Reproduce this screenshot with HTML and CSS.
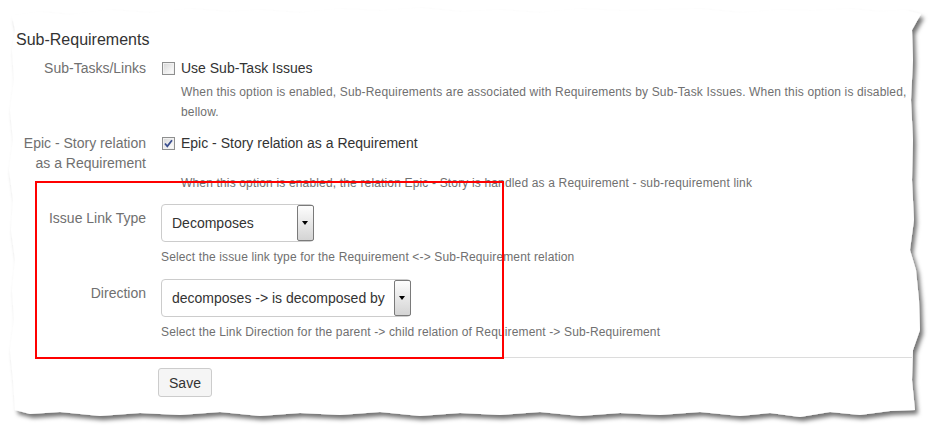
FILE: index.html
```html
<!DOCTYPE html>
<html lang="en">
<head>
<meta charset="utf-8">
<title>Sub-Requirements</title>
<link rel="stylesheet" href="styles.css">
</head>
<body>
<div class="sheet">
  <svg class="paper" width="930" height="431" viewBox="0 0 930 431" aria-hidden="true">
    <defs>
      <filter id="shadow" x="-5%" y="-5%" width="110%" height="115%">
        <feDropShadow dx="3" dy="4" stdDeviation="2" flood-color="#000" flood-opacity="0.55"/>
      </filter>
    </defs>
    <path filter="url(#shadow)" fill="#fff" d="M12,16 L40,12 L70,15 L110,10 L150,13 L190,9 L230,12 L260,10 L300,13 L340,9 L380,11 L420,8 L460,12 L500,10 L540,13 L580,9 L620,11 L660,10 L700,9 L740,13 L780,10 L810,11 L850,9 L880,12 L905,10 L921,14 L912,30 L913,60 L911,100 L913,140 L912,180 L914,220 L910,250 L916,270 L919,300 L920,330 L913,350 L912,380 L915,410 L890,411 L860,415 L830,412 L800,417 L770,413 L740,416 L700,412 L660,415 L620,413 L580,416 L540,412 L500,415 L460,413 L420,416 L380,412 L340,415 L300,413 L260,416 L220,412 L180,415 L140,413 L100,416 L60,412 L30,414 L15,410 L13,380 L10,350 L14,320 L12,290 L15,260 L11,230 L13,200 L9,170 L13,140 L10,110 L14,80 L12,50 L15,30 Z"/>
  </svg>

  <div class="content">
    <h2 class="title">Sub-Requirements</h2>

    <div class="row row-first">
      <div class="label">Sub-Tasks/Links</div>
      <div class="field">
        <div class="check"><span class="box"></span><span>Use Sub-Task Issues</span></div>
        <div class="desc desc-tight">When this option is enabled, Sub-Requirements are associated with Requirements by Sub-Task Issues. When this option is disabled,<br>bellow.</div>
      </div>
    </div>

    <div class="row row-second">
      <div class="label">Epic - Story relation as a Requirement</div>
      <div class="field">
        <div class="check"><span class="box checked"><svg width="11" height="11" viewBox="0 0 11 11"><path d="M2 5.5 L4.3 8.3 L9 2.2" fill="none" stroke="#3b4f8f" stroke-width="1.8"/></svg></span><span>Epic - Story relation as a Requirement</span></div>
        <div class="desc desc-loose">When this option is enabled, the relation Epic - Story is handled as a Requirement - sub-requirement link</div>
      </div>
    </div>

    <div class="row row-select">
      <div class="label label-select">Issue Link Type</div>
      <div class="field">
        <div class="select select-short"><span class="select-text">Decomposes</span><span class="arrow"></span></div>
        <div class="help">Select the issue link type for the Requirement &lt;-&gt; Sub-Requirement relation</div>
      </div>
    </div>

    <div class="row row-select row-last">
      <div class="label label-select">Direction</div>
      <div class="field">
        <div class="select select-long"><span class="select-text">decomposes -&gt; is decomposed by</span><span class="arrow"></span></div>
        <div class="help">Select the Link Direction for the parent -&gt; child relation of Requirement -&gt; Sub-Requirement</div>
      </div>
    </div>

    <div class="divider"></div>

    <div class="actions"><button class="btn" type="button">Save</button></div>
  </div>

  <div class="highlight"></div>
</div>
</body>
</html>
```

FILE: styles.css
```css
* { box-sizing: border-box; }

html, body {
  margin: 0;
  padding: 0;
  background: #fff;
}

body {
  font-family: "Liberation Sans", Arial, sans-serif;
  color: #333;
}

.sheet {
  position: relative;
  width: 930px;
  height: 431px;
  overflow: hidden;
}

.paper {
  position: absolute;
  left: 0;
  top: 0;
}

.content {
  position: relative;
  width: 912px;
  height: 405px;
  overflow: hidden;
  padding: 30px 0 0 16px;
}

.title {
  margin: 0;
  font-size: 16px;
  font-weight: normal;
  line-height: 20px;
  color: #333;
}

.row {
  display: grid;
  grid-template-columns: 130px 1fr;
  column-gap: 15px;
  align-items: start;
}

.row-first { margin-top: 8px; }
.row-second { margin-top: 11px; }
.row-select { margin-top: 10px; }
.row-last { margin-top: 11px; }

.label {
  text-align: right;
  font-size: 14px;
  line-height: 20px;
  color: #707070;
}

.label-select { padding-top: 5px; }

.field {
  min-width: 0;
}

.check {
  display: flex;
  align-items: center;
  gap: 6px;
  font-size: 14px;
  line-height: 20px;
  color: #333;
  padding-left: 1px;
}

.box {
  width: 13px;
  height: 13px;
  border: 1px solid #8e8f8f;
  background: linear-gradient(135deg, #d6d6d6 0%, #f4f4f4 70%, #fff 100%);
  box-shadow: inset 0 0 0 1px #f1f1f1;
  display: flex;
  align-items: center;
  justify-content: center;
  flex: none;
}

.desc {
  padding-left: 20px;
  font-size: 12px;
  line-height: 20px;
  letter-spacing: 0.16px;
  color: #707070;
  white-space: nowrap;
}

.desc-tight { margin-top: 4px; }
.desc-loose { margin-top: 20px; }

.select {
  display: flex;
  align-items: stretch;
  height: 38px;
  margin-top: 1px;
  border: 1px solid #ccc;
  border-radius: 4px;
  background: #fff;
}

.select-short { width: 153px; }
.select-long { width: 250px; }

.select-text {
  flex: 1;
  padding-left: 10px;
  font-size: 14px;
  line-height: 36px;
  color: #333;
  white-space: nowrap;
}

.arrow {
  position: relative;
  width: 17px;
  margin: 0 -1px 0 0;
  border: 1px solid #7a7a7a;
  border-radius: 2px;
  background: linear-gradient(#fdfdfd, #e8e8e8 50%, #d4d4d4);
  flex: none;
}

.arrow::after {
  content: "";
  position: absolute;
  left: 4px;
  top: 15px;
  border-left: 3.5px solid transparent;
  border-right: 3.5px solid transparent;
  border-top: 4px solid #000;
}

.help {
  margin-top: 5px;
  font-size: 12px;
  line-height: 20px;
  letter-spacing: 0.14px;
  color: #707070;
  white-space: nowrap;
}

.divider {
  margin: 15px 0 0 24px;
  height: 1px;
  background: #dcdcdc;
}

.actions {
  margin-top: 10px;
  padding-left: 142px;
}

.btn {
  width: 54px;
  height: 29px;
  padding: 0;
  border: 1px solid #ccc;
  border-radius: 3px;
  background: #f5f5f5;
  font-family: "Liberation Sans", Arial, sans-serif;
  font-size: 14px;
  color: #333;
}

.highlight {
  position: absolute;
  left: 35px;
  top: 181px;
  width: 469px;
  height: 178px;
  border: 2px solid #f00;
  pointer-events: none;
}
```
